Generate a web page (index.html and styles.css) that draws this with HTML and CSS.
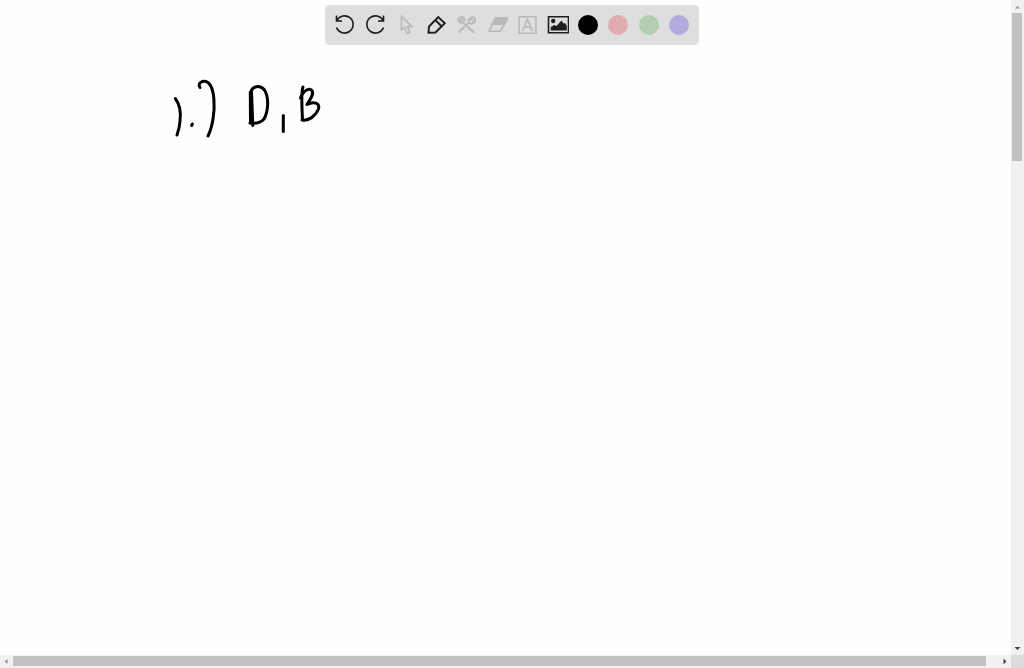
FILE: index.html
```html
<!DOCTYPE html>
<html lang="en">
<head>
<meta charset="utf-8">
<title>Whiteboard</title>
<link rel="stylesheet" href="styles.css">
</head>
<body>
<div class="toolbar" role="toolbar" aria-label="Drawing tools">
  <button class="tool" aria-label="Undo"><svg class="icon" viewBox="0 0 22 22"><path d="M2.500 1.500v5.500h5.500M2.800 6.700A8.600 8.600 0 1 1 2.500 13.500"/></svg></button>
  <button class="tool" aria-label="Redo"><svg class="icon" viewBox="0 0 22 22"><path d="M19.500 1.500v5.500h-5.500M19.200 6.700A8.600 8.600 0 1 0 19.500 13.500"/></svg></button>
  <button class="tool tool-off" aria-label="Select"><svg class="icon" viewBox="0 0 22 22"><path d="M6.500 2.500v13.500l3.300-2.500 2.400 6 2.600-1.100-2.400-5.900h4.300z"/></svg></button>
  <button class="tool" aria-label="Pen"><svg class="icon heavy" viewBox="0 0 22 22"><path d="M3.500 18.800 4 12.500 13.300 3 19.800 9.200 10.500 18.500zM10.300 6l6.500 6.500"/></svg></button>
  <button class="tool tool-off" aria-label="Tools"><svg class="icon heavy" viewBox="0 0 22 22"><path d="M3.500 18.500 14 8.500M8.500 9l10.500 9.500M3.500 4.500l2.500 2 1.500-2-1.500-1.500c3-.5 4 2 3 4.500C7.500 9.500 3 9.500 3.500 4.500zM13.500 6l3.500-3 3 1.500v3.500l-3.500 2-2.500-1.500zM16 4.500l3 4"/></svg></button>
  <button class="tool tool-off" aria-label="Eraser"><svg class="icon" viewBox="0 0 22 22"><path d="M9.500 4h12.500L14.500 17.200H3z"/><path class="solid" d="M9 3.300h14L19 11H5.200z"/></svg></button>
  <button class="tool tool-off" aria-label="Text"><svg class="icon" viewBox="0 0 22 22"><path d="M3 2.800h17v16.400H3zM6.500 17l5-12 5 12M8.300 13h6.400"/></svg></button>
  <button class="tool" aria-label="Image"><svg class="icon" viewBox="0 0 22 22"><path d="M1.500 2.800h20v16h-20z"/><circle class="solid" cx="6.200" cy="7" r="2.200"/><path class="solid" d="M3.800 16.500v-3.500l3.700-2 2 1 5-5.500 2 3 1.500-.5 1.800 3v4.500z"/></svg></button>
  <button class="tool swatch black" aria-label="Black"></button>
  <button class="tool swatch red" aria-label="Red"></button>
  <button class="tool swatch green" aria-label="Green"></button>
  <button class="tool swatch purple" aria-label="Purple"></button>
</div>
<div class="board">
  <main class="canvas">
    <svg class="ink" role="img" aria-label="1.) D, B">
      <path d="M175.300 98.500C179.500 104 181 113 180 121Q179.500 128 177 135"/>
      <path d="M191.600 125.500l.8-1.500"/>
      <path d="M200 87.500C197 83 203 79.500 208 82.500C215 88 215 108 213 119Q211.500 129 208 136"/>
      <path d="M250.300 92L250.500 123M251.500 92L252.800 125.500M251 92C252 86 260 84.500 264.500 90C269.500 98 268 112 264 119Q259 124.500 250 123"/>
      <path d="M283.300 115.500V131.500"/>
      <path d="M303 87Q301 91 302.500 120M300.500 98C303 91 308 88 311.500 90C315 94 310 99 307 104.500C314 101 320 103 318.500 109C315 117 308 121 302 120"/>
    </svg>
  </main>
  <div class="bar bar-v">
    <svg class="arrow faded" viewBox="0 0 13 13"><path d="M4 8.500 6.500 6 9 8.500z"/></svg>
    <div class="track"><div class="thumb"></div></div>
    <svg class="arrow" viewBox="0 0 13 13"><path d="M3.500 5h6L6.500 8z"/></svg>
  </div>
  <div class="bar bar-h">
    <svg class="arrow faded" viewBox="0 0 13 13"><path d="M7.500 4v5L4.500 6.500z"/></svg>
    <div class="track"><div class="thumb"></div></div>
    <svg class="arrow" viewBox="0 0 13 13"><path d="M5.500 3.500v6l3-3z"/></svg>
  </div>
  <div class="corner"></div>
</div>
</body>
</html>
```
FILE: styles.css
```css
* {
  box-sizing: border-box;
}

body {
  margin: 0;
  background: #fefefe;
  font-family: "Liberation Sans", Arial, sans-serif;
}

.board {
  display: grid;
  grid-template-columns: 1fr 13px;
  grid-template-rows: 1fr 13px;
  height: 100vh;
}

.canvas {
  min-width: 0;
  min-height: 0;
}

.ink {
  display: block;
  width: 100%;
  height: 100%;
  fill: none;
  stroke: #000;
  stroke-width: 3;
  stroke-linecap: round;
  stroke-linejoin: round;
}

/* The toolbar floats over the canvas, centred in the window. */
.toolbar {
  position: fixed;
  top: 5px;
  left: 0;
  right: 0;
  display: flex;
  align-items: center;
  justify-content: space-between;
  width: 374px;
  max-width: 100%;
  margin: 0 auto;
  padding: 9px;
  border-radius: 5px;
  background: #dedede;
}

.tool {
  flex: none;
  width: 22px;
  height: 22px;
  padding: 0;
  border: 0;
  background: none;
  color: #1b1d20;
}

.tool-off {
  color: #b9b9b9;
}

.icon {
  display: block;
  width: 22px;
  height: 22px;
  fill: none;
  stroke: currentColor;
  stroke-width: 1.6;
}

.heavy {
  stroke-width: 1.9;
}

.solid {
  fill: currentColor;
  stroke: none;
}

.swatch {
  width: 20px;
  height: 20px;
  margin: 1px;
  border-radius: 50%;
}

.black { background: #000; }
.red { background: #e0abb1; }
.green { background: #b2d0b1; }
.purple { background: #b2acdf; }

.bar {
  display: flex;
  background: #f1f1f1;
}

.bar-v {
  flex-direction: column;
}

.arrow {
  flex: none;
  width: 13px;
  height: 13px;
  fill: #444;
}

.faded {
  fill: #929292;
}

.track {
  flex: 1;
  padding: 0 2px 0 1px;
}

.bar-h .track {
  padding: 1px 0 2px;
}

.thumb {
  background: #c1c1c1;
}

.bar-v .thumb {
  height: 23.5%;
}

.bar-h .thumb {
  width: 98.8%;
  height: 100%;
}

.corner {
  background: #dcdcdc;
}
```
